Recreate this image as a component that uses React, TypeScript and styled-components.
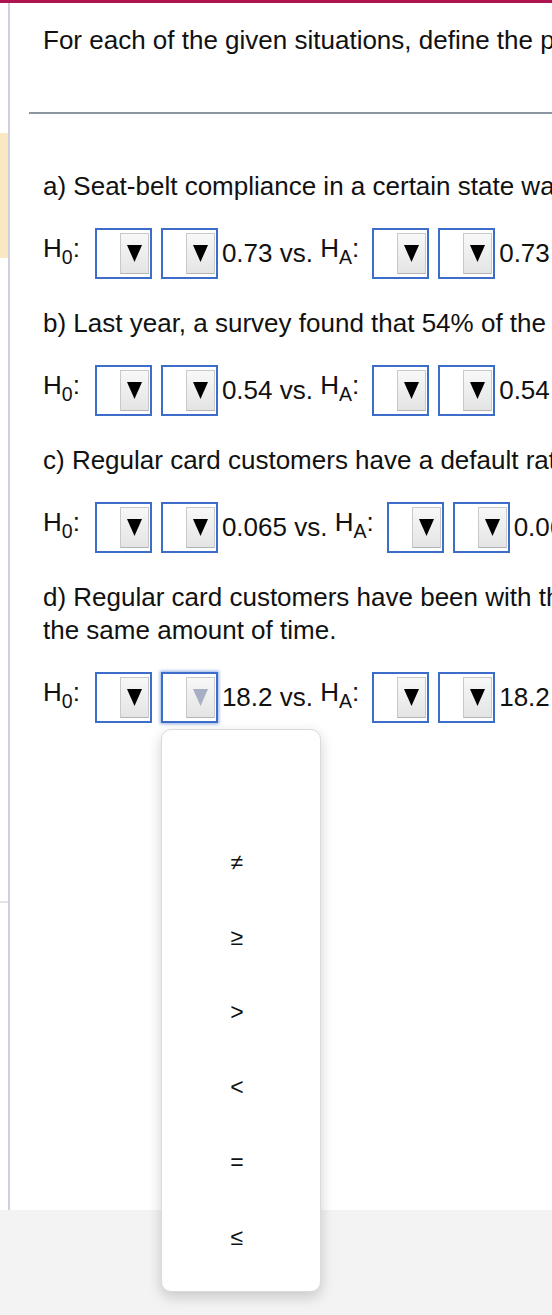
import styled, { createGlobalStyle } from 'styled-components';

const GlobalStyle = createGlobalStyle`
  html, body {
    margin: 0;
    padding: 0;
    overflow: hidden;
    background: #ffffff;
  }
  body {
    font-family: "Liberation Sans", Arial, sans-serif;
    color: #111111;
  }
`;

const Page = styled.div`
  display: flex;
  flex-direction: column;
  min-height: 100vh;
`;

const TopBar = styled.div`
  height: 3px;
  background-color: #ad1450;
`;

const Main = styled.div`
  display: flex;
  height: 1207px;
  position: relative;
  z-index: 2;
`;

const Gutter = styled.div`
  width: 8px;
  flex-shrink: 0;
  display: flex;
  flex-direction: column;
`;

const GutterMark = styled.div<{ $top: number; $height: number; $color: string }>`
  margin-top: ${(p) => p.$top}px;
  height: ${(p) => p.$height}px;
  background-color: ${(p) => p.$color};
`;

const GutterLine = styled.div`
  width: 2px;
  flex-shrink: 0;
  background-color: #cdd1de;
`;

const Content = styled.div`
  flex: 1;
  padding-left: 19px;
  white-space: nowrap;
  font-size: 26px;
`;

const Title = styled.p`
  margin: 21px 0 0 14px;
  line-height: 33px;
`;

const Separator = styled.hr`
  margin: 55px 0 0 0;
  border: none;
  height: 2px;
  background-color: #8c95a2;
`;

const Questions = styled.div`
  padding: 56px 0 0 14px;
  display: flex;
  flex-direction: column;
`;

const Question = styled.p`
  margin: 0;
  line-height: 33px;
`;

const HypRow = styled.div`
  display: flex;
  align-items: center;
  height: 51px;
  margin: 25px 0 28px;
`;

const Label = styled.span<{ $gap: number }>`
  margin-right: ${(p) => p.$gap}px;
  line-height: 33px;
`;

const Sub = styled.span`
  font-size: 0.75em;
  vertical-align: -0.36em;
`;

const Value = styled.span`
  margin-left: 4px;
  line-height: 33px;
`;

const SelectBox = styled.div<{ $focused?: boolean }>`
  position: relative;
  box-sizing: border-box;
  width: 57px;
  height: 51px;
  border: 2px solid #3d6dcb;
  display: flex;
  align-items: center;
  justify-content: flex-end;
  padding-right: 1px;
  background: #ffffff;
  box-shadow: ${(p) => (p.$focused ? '0 0 3px 1px rgba(61, 109, 203, 0.55)' : 'none')};

  & + & {
    margin-left: 9px;
  }
`;

const DropButton = styled.div`
  box-sizing: border-box;
  width: 29px;
  height: 41px;
  display: flex;
  align-items: center;
  justify-content: center;
  background: linear-gradient(#f8f8f8, #e4e4e4);
  border: 1px solid #c9c9c9;
  border-bottom-color: #b4b4b4;
`;

const Menu = styled.div`
  position: absolute;
  top: calc(100% + 8px);
  left: -2px;
  width: 160px;
  box-sizing: border-box;
  padding: 20px 8px 16px 0;
  background: #ffffff;
  border: 1px solid #dadada;
  border-radius: 10px;
  box-shadow: 0 5px 14px rgba(0, 0, 0, 0.18);
  z-index: 10;
`;

const MenuItem = styled.div`
  height: 75px;
  display: flex;
  align-items: center;
  justify-content: center;
  font-family: "Liberation Sans", "DejaVu Sans", sans-serif;
  font-size: 23px;
  color: #111111;
`;

const Gap = styled.div`
  flex: 1;
`;

const Footer = styled.div`
  flex: 1;
  background-color: #f3f3f3;
`;

const Arrow = ({ muted }: { muted?: boolean }) => (
  <svg width="15" height="17" viewBox="0 0 15 17">
    <polygon points="0,0 15,0 7.5,17" fill={muted ? '#a6afc3' : '#000000'} />
  </svg>
);

const Select = ({ focused, open }: { focused?: boolean; open?: boolean }) => (
  <SelectBox $focused={focused}>
    <DropButton>
      <Arrow muted={focused} />
    </DropButton>
    {open && (
      <Menu>
        {['', '≠', '≥', '>', '<', '=', '≤'].map((s, i) => (
          <MenuItem key={i}>{s}</MenuItem>
        ))}
      </Menu>
    )}
  </SelectBox>
);

const questions = [
  {
    lines: ['a) Seat-belt compliance in a certain state was 73% in 2008. The state wants to know if compliance has changed.'],
    value: '0.73',
  },
  {
    lines: ['b) Last year, a survey found that 54% of the employees were willing to pay for on-site day care.'],
    value: '0.54',
  },
  {
    lines: ['c) Regular card customers have a default rate of 6.5%. A credit card bank wants to know if that rate is different.'],
    value: '0.065',
  },
  {
    lines: [
      'd) Regular card customers have been with the company for an average of 18.2 months. The bank wants to know if Gold card customers have been with',
      'the same amount of time.',
    ],
    value: '18.2',
    open: true,
  },
];

export default function App() {
  return (
    <Page>
      <GlobalStyle />
      <TopBar />
      <Main>
        <Gutter>
          <GutterMark $top={130} $height={125} $color="#f9e9c2" />
          <GutterMark $top={643} $height={2} $color="#e4e4e4" />
        </Gutter>
        <GutterLine />
        <Content>
          <Title>
            For each of the given situations, define the parameter and write the null and alternative hypotheses.
          </Title>
          <Separator />
          <Questions>
            {questions.map((q) => (
              <div key={q.value}>
                {q.lines.map((l) => (
                  <Question key={l}>{l}</Question>
                ))}
                <HypRow>
                  <Label $gap={15}>
                    H<Sub>0</Sub>:
                  </Label>
                  <Select />
                  <Select focused={q.open} open={q.open} />
                  <Value>{q.value} vs.&nbsp;</Value>
                  <Label $gap={13}>
                    H<Sub>A</Sub>:
                  </Label>
                  <Select />
                  <Select />
                  <Value>{q.value}</Value>
                </HypRow>
              </div>
            ))}
          </Questions>
          <Gap />
        </Content>
      </Main>
      <Footer />
    </Page>
  );
}
